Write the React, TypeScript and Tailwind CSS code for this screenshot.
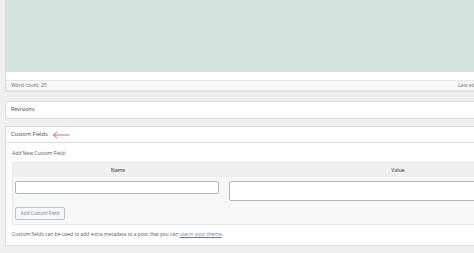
export default function App() {
  return (
    <div className="h-[253px] w-[474px] overflow-hidden bg-[#f0f0f1] text-[#3c434a]" style={{ fontFamily: '"Open Sans", "Noto Sans", sans-serif' }}>
      <div className="w-[640px] pl-[5px]">
        {/* editor */}
        <div className="border-x border-b border-[#dcdcde] bg-white">
          <div className="h-[72px] bg-[#d3e4dc]" />
          <div className="h-[8px]" />
          <div className="flex h-[11px] items-center border-y border-[#e4e4e6] bg-[#f6f7f7] px-[5px] text-[5px] leading-none text-[#646970]">
            <span className="w-[447px]">Word count: 25</span>
            <span>Last edited by admin</span>
          </div>
        </div>

        {/* revisions */}
        <div className="mt-[9px] flex h-[18px] items-center border border-[#dcdcde] bg-white px-[5px] text-[5.4px] leading-none text-[#3c434a]">
          Revisions
        </div>

        {/* custom fields */}
        <div className="mt-[7px] border border-[#dcdcde] bg-white">
          <div className="flex h-[16px] items-center gap-[4px] border-b border-[#dcdcde] px-[5px] text-[5.6px] leading-none text-[#3c434a]">
            <span>Custom Fields</span>
            <svg width="18" height="8" viewBox="0 0 18 8" fill="none" stroke="#e2557f" strokeWidth="0.9" strokeLinecap="round" strokeLinejoin="round">
              <path d="M17 4H1.5M5 1L1.5 4L5 7" />
            </svg>
          </div>
          <div className="px-[6px] pt-[8px] pb-[8px]">
            <p className="text-[5px] leading-none text-[#50575e]">Add New Custom Field:</p>
            <div className="mt-[6px] w-[600px] border border-[#e6e7e9] bg-[#f6f7f7]">
              <div className="flex h-[14px] items-center bg-[#f0f0f1] text-[5px] font-semibold leading-none text-[#50575e]">
                <div className="w-[210px] text-center">Name</div>
                <div className="w-[350px] text-center">Value</div>
              </div>
              <div className="flex items-start gap-[10px] px-[2px] pt-[4px]">
                <div className="h-[13px] w-[204px] rounded-[2px] border border-[#b4b6ba] bg-white" />
                <div className="h-[20px] w-[360px] rounded-[2px] border border-[#b4b6ba] bg-white" />
              </div>
              <div className="px-[2px] pt-[6px] pb-[4px]">
                <div className="flex h-[13px] w-[50px] items-center justify-center rounded-[2px] border border-[#b3c6da] bg-[#f6f7f7] text-[4.7px] leading-none text-[#6b86a6]">
                  Add Custom Field
                </div>
              </div>
            </div>
            <p className="mt-[7px] text-[5px] leading-none text-[#50575e]">
              Custom fields can be used to add extra metadata to a post that you can{' '}
              <span className="text-[#4a84bd] underline">use in your theme</span>.
            </p>
          </div>
        </div>
      </div>
    </div>
  );
}
